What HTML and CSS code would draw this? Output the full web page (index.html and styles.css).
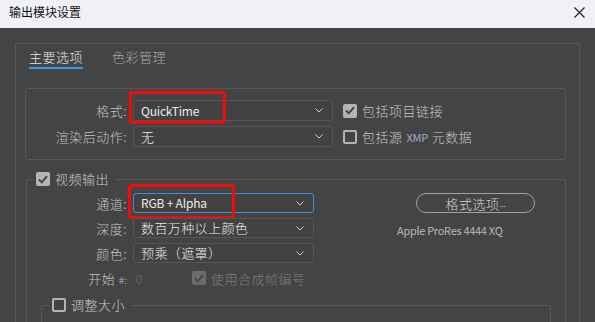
FILE: index.html
```html
<!DOCTYPE html>
<html lang="zh-CN">
<head>
<meta charset="utf-8">
<title>输出模块设置</title>
<link rel="stylesheet" href="styles.css">
</head>
<body>
<div class="titlebar">
  <span class="title">输出模块设置</span>
  <svg class="close" width="11" height="11" viewBox="0 0 11 11"><path d="M0.5 0.5 L10.5 10.5 M10.5 0.5 L0.5 10.5" stroke="#1a1a1a" stroke-width="1.1" fill="none"/></svg>
</div>
<div class="body">
  <div class="panel">
    <div class="tabs">
      <div class="tab active">主要选项</div>
      <div class="tab">色彩管理</div>
    </div>

    <div class="group main-group">
      <div class="lbl">格式:</div>
      <div class="select">
        <span class="val latin">QuickTime</span>
        <svg class="chev" width="8" height="5" viewBox="0 0 8 5"><path d="M0.5 0.5 L4 4 L7.5 0.5" stroke="#d0d0d0" fill="none"/></svg>
        <span class="mark mark-format"></span>
      </div>
      <label class="check"><span class="box on"><svg width="10" height="9" viewBox="0 0 10 9"><path d="M1 4.5 L3.8 7.3 L9 1.2" stroke="#444" stroke-width="2" fill="none"/></svg></span>包括项目链接</label>

      <div class="lbl">渲染后动作:</div>
      <div class="select">
        <span class="val">无</span>
        <svg class="chev" width="8" height="5" viewBox="0 0 8 5"><path d="M0.5 0.5 L4 4 L7.5 0.5" stroke="#d0d0d0" fill="none"/></svg>
      </div>
      <label class="check"><span class="box"></span>包括源 <span class="xmp">XMP</span> 元数据</label>
    </div>

    <fieldset class="video">
      <legend><span class="box on"><svg width="10" height="9" viewBox="0 0 10 9"><path d="M1 4.5 L3.8 7.3 L9 1.2" stroke="#444" stroke-width="2" fill="none"/></svg></span>视频输出</legend>
      <div class="video-body">
        <div class="rows">
          <div class="lbl">通道:</div>
          <div class="select focus">
            <span class="val latin">RGB + Alpha</span>
            <svg class="chev" width="8" height="5" viewBox="0 0 8 5"><path d="M0.5 0.5 L4 4 L7.5 0.5" stroke="#d0d0d0" fill="none"/></svg>
            <span class="mark mark-channel"></span>
          </div>
          <div class="lbl">深度:</div>
          <div class="select">
            <span class="val">数百万种以上颜色</span>
            <svg class="chev" width="8" height="5" viewBox="0 0 8 5"><path d="M0.5 0.5 L4 4 L7.5 0.5" stroke="#d0d0d0" fill="none"/></svg>
          </div>
          <div class="lbl">颜色:</div>
          <div class="select">
            <span class="val">预乘（遮罩）</span>
            <svg class="chev" width="8" height="5" viewBox="0 0 8 5"><path d="M0.5 0.5 L4 4 L7.5 0.5" stroke="#d0d0d0" fill="none"/></svg>
          </div>
          <div class="lbl">开始 <span class="hash">#:</span></div>
          <div class="start">
            <span class="num">0</span>
            <label class="check disabled"><span class="box on"><svg width="10" height="9" viewBox="0 0 10 9"><path d="M1 4.5 L3.8 7.3 L9 1.2" stroke="#474747" stroke-width="2" fill="none"/></svg></span>使用合成帧编号</label>
          </div>
        </div>
        <div class="side">
          <div class="btn">格式选项<span class="dots">...</span></div>
          <div class="codec">Apple ProRes 4444 XQ</div>
        </div>
      </div>
      <fieldset class="resize">
        <legend><span class="box"></span>调整大小</legend>
      </fieldset>
    </fieldset>
  </div>
</div>
</body>
</html>
```

FILE: styles.css
```css
* { box-sizing: border-box; }
html, body { margin: 0; padding: 0; }
body {
  width: 595px;
  height: 322px;
  overflow: hidden;
  background: #444444;
  font-family: "Noto Sans CJK SC", "Noto Sans", sans-serif;
  font-size: 13px;
  font-weight: 300;
  color: #c4c4c4;
}
.titlebar {
  height: 28px;
  background: #f0f1f7;
  display: flex;
  align-items: flex-start;
  justify-content: space-between;
  padding: 3px 10px 0 9px;
}
.title {
  font-size: 12px;
  font-weight: 400;
  line-height: 17px;
  color: #111;
}
.close { margin-top: 4px; }
.body {
  padding: 15px 15px 0 15px;
}
.panel {
  border: 1px solid #565656;
  border-radius: 2px;
  height: 300px;
  padding: 0 13px 0 9px;
}
.tabs {
  display: flex;
  gap: 29px;
  padding: 4px 0 0 4px;
}
.tab {
  line-height: 18px;
  padding-bottom: 1px;
  border-bottom: 2px solid transparent;
  letter-spacing: 0.5px;
  color: #a8a8a8;
}
.tab.active {
  color: #e4e4e4;
  border-bottom-color: #3a9ae6;
}
.group {
  border: 1px solid #575757;
  border-radius: 2px;
}
.main-group {
  margin-top: 19px;
  padding: 11px 0 12px 0;
  display: grid;
  grid-template-columns: 101px 200px auto;
  column-gap: 6px;
  row-gap: 5px;
  align-items: center;
}
.main-group .check { margin-left: 4px; }
.lbl {
  text-align: right;
  letter-spacing: 0.5px;
  color: #c2c2c2;
  white-space: nowrap;
}
.select {
  position: relative;
  height: 21px;
  border: 1px solid #565656;
  border-radius: 3px;
  background: #424242;
  display: flex;
  align-items: center;
  justify-content: space-between;
  padding: 0 9px 0 7px;
  color: #ececec;
  letter-spacing: 0.4px;
}
.select.focus { border-color: #3c8fd8; }
.val { line-height: 18px; }
.val.latin {
  font-size: 12px;
  font-weight: 400;
  letter-spacing: -0.2px;
}
.chev { flex: none; }
.mark {
  position: absolute;
  border: 3px solid #f20b0b;
  border-radius: 4px;
  pointer-events: none;
}
.mark-format { left: -5px; top: -10px; width: 97px; height: 33px; }
.mark-channel { left: -6px; top: -10px; width: 107px; height: 35px; }
.check {
  display: flex;
  align-items: center;
  gap: 5px;
  letter-spacing: 0.5px;
  color: #c6c6c6;
  white-space: nowrap;
}
.box {
  width: 14px;
  height: 14px;
  border: 2px solid #b4b4b4;
  border-radius: 2px;
  display: inline-flex;
  align-items: center;
  justify-content: center;
  flex: none;
}
.box.on { background: #b4b4b4; }
.xmp {
  font-size: 11px;
  font-weight: 400;
  color: #9fb0c8;
  letter-spacing: -0.3px;
  margin: 0 -1px;
}
.video {
  margin: 10px 0 0 1px;
  padding: 5px 0 0 0;
  border: 1px solid #575757;
  border-bottom: none;
  border-radius: 2px 2px 0 0;
  height: 200px;
  min-width: 0;
}
legend {
  display: flex;
  align-items: center;
  gap: 5px;
  line-height: 18px;
  padding: 0 6px 0 3px;
  margin-left: 6px;
  letter-spacing: 0.5px;
  color: #cccccc;
}
.video-body {
  display: flex;
  align-items: flex-start;
}
.rows {
  display: grid;
  grid-template-columns: 100px 181px;
  column-gap: 6px;
  row-gap: 5px;
  align-items: center;
}
.rows .select { height: 20px; }
.hash {
  font-size: 10px;
  font-weight: 400;
  color: #8ea6c4;
  letter-spacing: 0;
}
.start {
  height: 20px;
  display: flex;
  align-items: center;
}
.num {
  width: 59px;
  padding-left: 3px;
  color: #6e6e6e;
  font-size: 12px;
}
.check.disabled { color: #7e7e7e; }
.check.disabled .box { border-color: #6c6c6c; }
.check.disabled .box.on { background: #6c6c6c; }
.side {
  margin-left: 83px;
  display: flex;
  flex-direction: column;
}
.btn {
  margin-left: 19px;
  width: 119px;
  height: 20px;
  border: 1.5px solid #a2a2a2;
  border-radius: 10px;
  display: flex;
  align-items: center;
  justify-content: center;
  color: #d2d2d2;
  letter-spacing: 0.5px;
}
.dots {
  font-size: 10px;
  letter-spacing: -0.5px;
  align-self: flex-end;
  padding-bottom: 2px;
}
.codec {
  margin-top: 9px;
  font-size: 11px;
  font-weight: 400;
  letter-spacing: -0.3px;
  line-height: 16px;
  color: #b4b8c0;
}
.resize {
  margin: 8px 14px 0 14px;
  padding: 0;
  border: 1px solid #575757;
  border-bottom: none;
  border-radius: 2px 2px 0 0;
  height: 60px;
  min-width: 0;
}
.resize legend { margin-left: 7px; }
```
